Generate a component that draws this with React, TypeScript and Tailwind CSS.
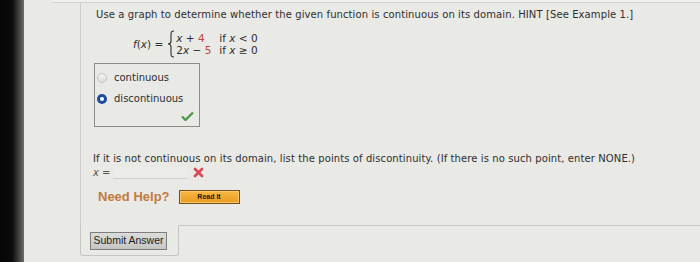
import React from 'react';

const verdana = { fontFamily: '"DejaVu Sans", Verdana, sans-serif' };

const Brace = () => (
  <svg width="8" height="28" viewBox="0 0 8 28" className="shrink-0">
    <path d="M7 1 C4 1 4 2.5 4 5 L4 11 C4 13 3 14 1 14 C3 14 4 15 4 17 L4 23 C4 25.5 4 27 7 27" fill="none" stroke="#2e2e2e" strokeWidth="1.1" />
  </svg>
);

const Radio = ({ checked }: { checked?: boolean }) =>
  checked ? (
    <span className="w-[10px] h-[10px] rounded-full bg-[#1d4c9c] flex items-center justify-center shrink-0">
      <span className="w-[4px] h-[4px] rounded-full bg-white" />
    </span>
  ) : (
    <span className="w-[10px] h-[10px] rounded-full border border-[#c4c4c2] bg-gradient-to-b from-[#f4f4f2] to-[#dcdcda] shrink-0" />
  );

export default function App() {
  return (
    <div className="w-[700px] h-[262px] flex overflow-hidden text-[#2e2e2e]" style={verdana}>
      <div className="w-[24px] shrink-0 bg-gradient-to-r from-[#050505] via-[#0b0b0b] to-[#6d6d6b]" />
      <div className="flex-1 bg-[#e9e9e6] flex flex-col">
        <div className="h-[3px] ml-[28px] border-b border-[#d2d2d0] bg-[#efefed] shrink-0" />
        <div className="ml-[56px] flex flex-col flex-1">
          <div className="h-[222px] border-l border-[#cdcdcb] pl-[15px] flex flex-col">
            <p className="text-[10px] leading-[13px] mt-[5px] tracking-[0.1px]">
              Use a graph to determine whether the given function is continuous on its domain. HINT [See Example 1.]
            </p>

            <div className="flex items-center mt-[9px] ml-[37px] text-[10.5px] leading-[12px]">
              <span className="mr-[4px]">
                <i>f</i>(<i>x</i>) =
              </span>
              <Brace />
              <div className="grid grid-cols-[auto_auto] gap-x-[8px] ml-[1px]">
                <span>
                  <i>x</i> + <span className="text-[#c4453d]">4</span>
                </span>
                <span>
                  if <i>x</i> &lt; 0
                </span>
                <span>
                  2<i>x</i> − <span className="text-[#c4453d]">5</span>
                </span>
                <span>
                  if <i>x</i> ≥ 0
                </span>
              </div>
            </div>

            <div className="mt-[5px] ml-[-2px] w-[106px] h-[64px] border border-[#8c8c8a] flex flex-col text-[10px] leading-[12px] pl-[2px] pt-[8px]">
              <div className="flex items-center gap-[7px]">
                <Radio />
                <span>continuous</span>
              </div>
              <div className="flex items-center gap-[7px] mt-[9px]">
                <Radio checked />
                <span>discontinuous</span>
              </div>
              <div className="flex justify-end pr-[5px] mt-[6px]">
                <svg width="13" height="10" viewBox="0 0 13 10">
                  <path d="M1 5.5 L4.5 9 L12 1.5" fill="none" stroke="#4d9a4f" strokeWidth="2.4" strokeLinejoin="round" />
                </svg>
              </div>
            </div>

            <p className="text-[10px] leading-[13px] mt-[25px] ml-[-3px] tracking-[0.1px]">
              If it is not continuous on its domain, list the points of discontinuity. (If there is no such point, enter NONE.)
            </p>

            <div className="flex items-center mt-[0px] ml-[-3px] text-[10px]">
              <span className="text-[#555] w-[20px]">
                <i>x</i> =
              </span>
              <span className="w-[74px] h-[12px] bg-[#ecece9] border-b border-[#d0d0ce]" />
              <svg width="11" height="11" viewBox="0 0 11 11" className="ml-[6px]">
                <path d="M2 2 L9 9 M9 2 L2 9" stroke="#d64b5a" strokeWidth="2.8" strokeLinecap="round" />
              </svg>
            </div>

            <div className="flex items-center mt-[7px] ml-[2px]">
              <span className="text-[13px] font-bold text-[#c47a3c]" style={{ fontFamily: '"Liberation Sans", Arial, sans-serif' }}>
                Need Help?
              </span>
              <button
                className="ml-[9px] w-[61px] h-[14px] border border-[#7a4e12] bg-gradient-to-b from-[#f8b944] to-[#eb9a1c] shadow-[inset_0_0_0_1px_#f7c870] flex items-center justify-center text-[7px] font-bold text-[#1a1a1a]"
                style={{ fontFamily: '"Liberation Sans", Arial, sans-serif' }}
              >
                Read It
              </button>
            </div>
          </div>

          <div className="flex flex-1">
            <div className="w-[99px] h-[31px] border-l border-b border-r border-[#c6c6c4] rounded-b-[3px] pl-[9px] pt-[7px]">
              <button
                className="w-[77px] h-[18px] border border-[#7d7d7b] bg-gradient-to-b from-[#dcdcda] to-[#c6c6c4] text-[10.5px] text-[#222] flex items-center justify-center"
                style={{ fontFamily: '"Liberation Sans", Arial, sans-serif' }}
              >
                Submit Answer
              </button>
            </div>
            <div className="flex-1 border-t border-[#c6c6c4]" />
          </div>
        </div>
      </div>
    </div>
  );
}
